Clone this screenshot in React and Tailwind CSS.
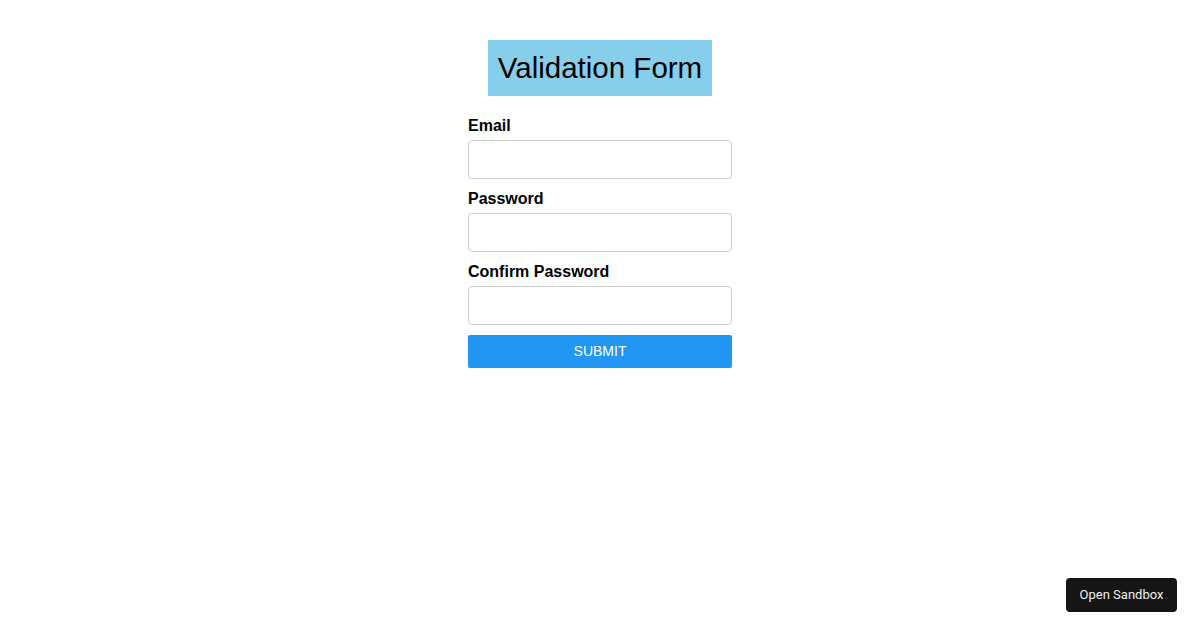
export default function App() {
  return (
    <div className="relative min-h-[630px] w-full bg-white font-['Liberation_Sans',Arial,sans-serif] text-black">
      <div className="flex flex-col items-center pt-[40px]">
        <h1 className="bg-[#87ceeb] px-[10px] py-[10px] text-[29.5px] leading-[36px] font-normal">Validation Form</h1>
        <form className="mt-[20px] flex w-[264px] flex-col" onSubmit={(e) => e.preventDefault()}>
          <label className="pt-[1px] text-[16px] leading-[18px] font-bold">Email</label>
          <input className="mt-[5px] h-[39px] w-full rounded-[4px] border border-[#cccccc] px-2 outline-none" />
          <label className="mt-[10px] pt-[1px] text-[16px] leading-[18px] font-bold">Password</label>
          <input type="password" className="mt-[5px] h-[39px] w-full rounded-[4px] border border-[#cccccc] px-2 outline-none" />
          <label className="mt-[10px] pt-[1px] text-[16px] leading-[18px] font-bold">Confirm Password</label>
          <input type="password" className="mt-[5px] h-[39px] w-full rounded-[4px] border border-[#cccccc] px-2 outline-none" />
          <button type="submit" className="mt-[10px] h-[33px] w-full rounded-[2px] bg-[#2196f3] text-[14px] text-white uppercase">Submit</button>
        </form>
      </div>
      <button className="absolute right-[23px] bottom-[18px] h-[34px] w-[111px] rounded-[4px] bg-[#151515] font-['Roboto',Arial,sans-serif] text-[13px] text-[#eeeeee]">Open Sandbox</button>
    </div>
  );
}
